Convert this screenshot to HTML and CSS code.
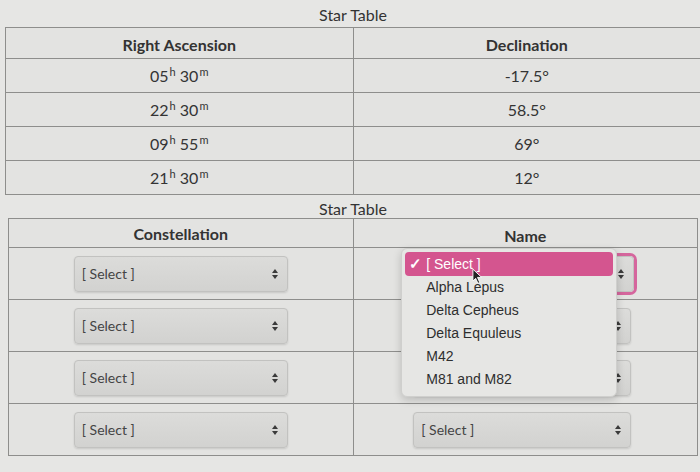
FILE: index.html
```html
<!DOCTYPE html>
<html>
<head>
<meta charset="utf-8">
<link rel="stylesheet" href="styles.css">
</head>
<body>
<div class="page">
  <table class="stars t1">
    <caption>Star Table</caption>
    <thead>
      <tr><th>Right Ascension</th><th>Declination</th></tr>
    </thead>
    <tbody>
      <tr><td>05<sup>h</sup> 30<sup>m</sup></td><td>-17.5&deg;</td></tr>
      <tr><td>22<sup>h</sup> 30<sup>m</sup></td><td>58.5&deg;</td></tr>
      <tr><td>09<sup>h</sup> 55<sup>m</sup></td><td>69&deg;</td></tr>
      <tr><td>21<sup>h</sup> 30<sup>m</sup></td><td>12&deg;</td></tr>
    </tbody>
  </table>

  <table class="stars t2">
    <caption>Star Table</caption>
    <thead>
      <tr><th>Constellation</th><th class="name-h">Name</th></tr>
    </thead>
    <tbody>
      <tr>
        <td><div class="sel left"><span>[ Select ]</span><svg class="arr" viewBox="0 0 6 10"><path d="M3 0 L6 4 L0 4 Z M3 10 L6 6 L0 6 Z"/></svg></div></td>
        <td>
          <div class="anchor">
            <div class="sel right focus"><span class="covered">[ Select ]</span><svg class="arr" viewBox="0 0 6 10"><path d="M3 0 L6 4 L0 4 Z M3 10 L6 6 L0 6 Z"/></svg></div>
            <div class="popup">
              <div class="opt active"><span class="check">&#10003;</span>[ Select ]</div>
              <div class="opt">Alpha Lepus</div>
              <div class="opt">Delta Cepheus</div>
              <div class="opt">Delta Equuleus</div>
              <div class="opt">M42</div>
              <div class="opt">M81 and M82</div>
              <svg class="cursor" viewBox="0 0 12 18"><path d="M1 1 L1 14 L4 11 L6.5 16.5 L8.5 15.5 L6 10 L10.5 10 Z" fill="#222" stroke="#fff" stroke-width="1"/></svg>
            </div>
          </div>
        </td>
      </tr>
      <tr>
        <td><div class="sel left"><span>[ Select ]</span><svg class="arr" viewBox="0 0 6 10"><path d="M3 0 L6 4 L0 4 Z M3 10 L6 6 L0 6 Z"/></svg></div></td>
        <td><div class="sel right"><span class="covered">[ Select ]</span><svg class="arr" viewBox="0 0 6 10"><path d="M3 0 L6 4 L0 4 Z M3 10 L6 6 L0 6 Z"/></svg></div></td>
      </tr>
      <tr>
        <td><div class="sel left"><span>[ Select ]</span><svg class="arr" viewBox="0 0 6 10"><path d="M3 0 L6 4 L0 4 Z M3 10 L6 6 L0 6 Z"/></svg></div></td>
        <td><div class="sel right"><span class="covered">[ Select ]</span><svg class="arr" viewBox="0 0 6 10"><path d="M3 0 L6 4 L0 4 Z M3 10 L6 6 L0 6 Z"/></svg></div></td>
      </tr>
      <tr>
        <td><div class="sel left"><span>[ Select ]</span><svg class="arr" viewBox="0 0 6 10"><path d="M3 0 L6 4 L0 4 Z M3 10 L6 6 L0 6 Z"/></svg></div></td>
        <td><div class="sel right"><span>[ Select ]</span><svg class="arr" viewBox="0 0 6 10"><path d="M3 0 L6 4 L0 4 Z M3 10 L6 6 L0 6 Z"/></svg></div></td>
      </tr>
    </tbody>
  </table>
</div>
</body>
</html>
```

FILE: styles.css
```css
html, body {
  margin: 0;
  padding: 0;
  background: #e6e6e4;
  font-family: Lato, "Open Sans", sans-serif;
  color: #343434;
  overflow: hidden;
}

.page {
  width: 700px;
  height: 472px;
  position: relative;
}

.stars {
  border-collapse: collapse;
  background: #e3e3e1;
  table-layout: fixed;
}

.stars caption {
  font-size: 16px;
  color: #333;
  text-align: center;
  caption-side: top;
}

.stars th, .stars td {
  border: 1px solid #8e8e8c;
  text-align: center;
  padding: 0;
  font-size: 16px;
}

.stars th {
  font-weight: 700;
  color: #333;
}

.stars sup {
  font-size: 11px;
  vertical-align: 0;
  position: relative;
  top: -6px;
  margin-left: 1px;
}

/* Table 1 */
.t1 {
  margin-left: 5px;
  width: 696px;
}
.t1 caption {
  height: 27px;
  line-height: 30px;
}
.t1 th {
  height: 28px;
  padding-top: 2px;
}
.t1 td {
  height: 33px;
}

/* Table 2 */
.t2 {
  margin-left: 8px;
  width: 690px;
}
.t2 caption {
  height: 23px;
  line-height: 28px;
}
.t2 th {
  height: 27px;
  padding-top: 1px;
}
.t2 th.name-h {
  padding-top: 5px;
  height: 23px;
}
.t2 td {
  height: 51px;
}

.anchor {
  position: relative;
  width: 218px;
  margin: 0 auto;
}

.sel {
  box-sizing: border-box;
  height: 36px;
  margin: 0 auto;
  display: flex;
  align-items: center;
  justify-content: space-between;
  padding: 0 9px 0 7px;
  background: linear-gradient(#dcdcda, #d2d2d0);
  border: 1px solid #c2c2c0;
  border-radius: 4px;
  box-shadow: 0 1px 2px rgba(0,0,0,0.12);
  font-size: 14px;
  color: #444;
}
.sel.left { width: 214px; }
.sel.right { width: 218px; position: relative; left: -3px; }
.anchor .sel.right { left: 0; }
.sel.focus {
  box-shadow: 0 0 0 3px #d5669d;
}
.covered { visibility: hidden; }

.arr {
  width: 6px;
  height: 10px;
  fill: #3a3a3a;
}

.popup {
  position: absolute;
  left: -15px;
  top: -8px;
  width: 216px;
  box-sizing: border-box;
  padding: 3px 3px 5px;
  background: #e6e6e4;
  border: 1px solid #cfcfcd;
  border-radius: 6px;
  box-shadow: 0 3px 8px rgba(0,0,0,0.18);
  font-family: "Liberation Sans", Arial, sans-serif;
  text-align: left;
  z-index: 5;
}

.opt {
  height: 23px;
  line-height: 23px;
  padding-left: 21px;
  font-size: 14px;
  color: #2e2e2e;
  position: relative;
}
.opt.active {
  background: #d4558f;
  color: #fff;
  border-radius: 4px;
  height: 24px;
  line-height: 24px;
}
.check {
  position: absolute;
  left: 4px;
  font-size: 15px;
  font-weight: 700;
}

.cursor {
  position: absolute;
  left: 70px;
  top: 19px;
  width: 11px;
  height: 17px;
}
```
